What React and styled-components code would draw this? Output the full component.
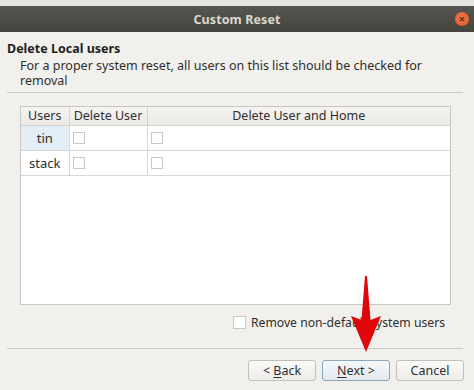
import React from "react";
import { styled, createGlobalStyle } from "styled-components";

const GlobalStyle = createGlobalStyle`
  html, body {
    margin: 0;
    padding: 0;
    background: #e6e4e0;
  }
  * {
    box-sizing: border-box;
  }
`;

const users = [
  { name: "tin", selected: true },
  { name: "stack", selected: false },
];

function App() {
  return (
    <>
      <GlobalStyle />
      <StWindow>
        <StTitleBar>
          <StTitle>Custom Reset</StTitle>
          <StClose>×</StClose>
        </StTitleBar>
        <StBody>
          <StHeading>Delete Local users</StHeading>
          <StSubText>
            For a proper system reset, all users on this list should be checked for
            removal
          </StSubText>
          <StRule />
          <StTableWrap>
            <StTable>
              <colgroup>
                <col style={{ width: 48 }} />
                <col style={{ width: 78 }} />
                <col />
              </colgroup>
              <thead>
                <tr>
                  <StTh>Users</StTh>
                  <StTh>Delete User</StTh>
                  <StTh>Delete User and Home</StTh>
                </tr>
              </thead>
              <tbody>
                {users.map((u) => (
                  <tr key={u.name}>
                    <StNameCell $selected={u.selected}>{u.name}</StNameCell>
                    <StTd>
                      <StCheck />
                    </StTd>
                    <StTd>
                      <StCheck />
                    </StTd>
                  </tr>
                ))}
              </tbody>
            </StTable>
          </StTableWrap>
          <StOptionRow>
            <StCheck $large />
            <span>Remove non-default system users</span>
          </StOptionRow>
          <StRule $bottom />
          <StButtons>
            <StButton>
              &lt; <u>B</u>ack
            </StButton>
            <StButton $focused>
              <u>N</u>ext &gt;
            </StButton>
            <StButton>Cancel</StButton>
          </StButtons>
          <StArrow width="34" height="80" viewBox="0 0 34 80">
            <path d="M16 0 L18 0 L21.5 44 L32 40 L17 76 L2 40 L12.5 44 Z" fill="#e0050b" />
          </StArrow>
        </StBody>
      </StWindow>
    </>
  );
}

export default App;

const StWindow = styled.div`
  margin-top: 6px;
  width: 474px;
  height: 384px;
  display: flex;
  flex-direction: column;
  font-family: "Noto Sans", "DejaVu Sans", sans-serif;
  font-size: 12.5px;
  color: #333;
`;

const StTitleBar = styled.div`
  position: relative;
  height: 26px;
  flex-shrink: 0;
  display: flex;
  align-items: center;
  justify-content: center;
  background: linear-gradient(#56554f, #45443e);
`;

const StTitle = styled.div`
  color: #dcd8cf;
  font-weight: bold;
  font-size: 12.5px;
  letter-spacing: 0.1px;
`;

const StClose = styled.div`
  position: absolute;
  right: 5px;
  top: 6px;
  width: 14px;
  height: 14px;
  border-radius: 50%;
  background: radial-gradient(circle at 50% 40%, #f07a4a, #e0552a);
  color: #5a2a18;
  font-size: 11px;
  line-height: 13px;
  text-align: center;
  font-weight: bold;
`;

const StBody = styled.div`
  position: relative;
  flex: 1;
  background: #f2f0ec;
  padding: 8px 11px 0 7px;
  display: flex;
  flex-direction: column;
`;

const StHeading = styled.div`
  font-weight: bold;
  color: #1e1e1e;
  line-height: 18px;
`;

const StSubText = styled.div`
  padding-left: 13px;
  line-height: 15px;
  color: #2e2e2e;
  width: 430px;
`;

const StRule = styled.div`
  height: 1px;
  flex-shrink: 0;
  background: #cfccc6;
  margin: ${(p) => (p.$bottom ? "17px 0 11px" : "4px 0 13px")};
`;

const StTableWrap = styled.div`
  margin-left: 13px;
  width: 431px;
  height: 199px;
  flex-shrink: 0;
  background: #fff;
  border: 1px solid #c9c6c0;
`;

const StTable = styled.table`
  width: 100%;
  border-collapse: collapse;
  table-layout: fixed;
  line-height: 16px;
`;

const StTh = styled.th`
  height: 18px;
  padding: 0;
  font-weight: normal;
  color: #2e2e2e;
  background: linear-gradient(#f5f4f2, #ebe9e5);
  border-right: 1px solid #d5d2cc;
  border-bottom: 1px solid #d5d2cc;
  text-align: center;
  &:last-child {
    border-right: none;
  }
`;

const StTd = styled.td`
  height: 25px;
  padding: 0 0 0 3px;
  border-right: 1px solid #d8d8d8;
  border-bottom: 1px solid #d8d8d8;
  &:last-child {
    border-right: none;
  }
`;

const StNameCell = styled.td`
  height: 25px;
  padding: 0;
  text-align: center;
  color: #2e2e2e;
  background: ${(p) => (p.$selected ? "#e3edf5" : "#fff")};
  border-right: 1px solid #d8d8d8;
  border-bottom: 1px solid #d8d8d8;
  font-size: 13px;
`;

const StCheck = styled.span`
  display: inline-block;
  flex-shrink: 0;
  width: ${(p) => (p.$large ? "13px" : "12px")};
  height: ${(p) => (p.$large ? "13px" : "12px")};
  border: 1px solid #cbc8c2;
  background: #fff;
  vertical-align: middle;
`;

const StOptionRow = styled.div`
  display: flex;
  align-items: center;
  justify-content: flex-end;
  gap: 5px;
  height: 18px;
  margin-top: 8px;
  padding-right: 18px;
  color: #2e2e2e;
  font-size: 12.2px;
`;

const StButtons = styled.div`
  display: flex;
  justify-content: flex-end;
  gap: 6px;
  margin-right: -1px;
`;

const StButton = styled.button`
  width: 68px;
  height: 21px;
  font-family: inherit;
  font-size: 12.5px;
  color: #2e2e2e;
  border-radius: 3px;
  border: 1px solid ${(p) => (p.$focused ? "#8aa6bd" : "#c2bfb9")};
  background: ${(p) =>
    p.$focused
      ? "linear-gradient(#f6f8fa, #e4eaf0)"
      : "linear-gradient(#fafafa, #eeece9)"};
  padding: 0;
  u {
    text-decoration-thickness: 1px;
    text-underline-offset: 2px;
  }
`;

const StArrow = styled.svg`
  position: absolute;
  left: 349px;
  top: 244px;
`;
